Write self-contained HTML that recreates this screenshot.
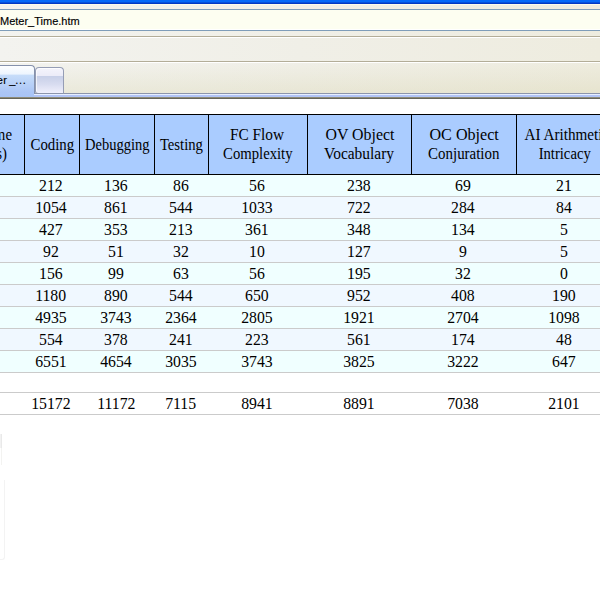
<!DOCTYPE html>
<html><head><meta charset="utf-8">
<style>
html,body{margin:0;padding:0;background:#fff;}
body{width:600px;height:598px;overflow:hidden;position:relative;font-family:"Liberation Serif",serif;}
.abs{position:absolute;}
#chrome{left:0;top:0;width:600px;height:99px;background:linear-gradient(to right,#f3f3ef 0%,#f0efe7 50%,#eeecdf 100%);}
#title{left:0;top:0;width:600px;height:2px;background:#0468f8;}
#title2{left:0;top:2px;width:600px;height:3px;background:linear-gradient(to bottom,#0450dc 0,#0450dc 1px,#0038c4 1px,#0038c4 2px,#fdfbe8 2px);}
#addr{left:-2px;top:9px;width:610px;height:20px;border:1px solid #7f9db9;background:linear-gradient(to bottom,#fdfef1 0,#fdfef1 19px,#fff 19px);}
#tabbg{left:0;top:63px;width:600px;height:30px;background:linear-gradient(to bottom,rgba(200,195,140,0) 0%,rgba(200,195,140,0.2) 100%);}
#addrtxt{left:0px;top:15px;letter-spacing:0;-webkit-text-stroke:0.15px #000;font:11px "Liberation Sans",sans-serif;color:#000;white-space:nowrap;line-height:13px;}
.sepd{left:0;width:600px;height:1px;background:#b3ad98;}
.sepl{left:0;width:600px;height:1px;background:#fff;}
#tab1{left:-20px;top:65px;width:53px;height:28px;border:1px solid #8591ac;border-bottom:none;border-radius:4px 4px 0 0;background:linear-gradient(to bottom,#fdfeff 0%,#eef5fe 28%,#c6dcf9 34%,#a8c3f6 100%);}
.t1{top:74px;-webkit-text-stroke:0.15px #000;font:11px "Liberation Sans",sans-serif;color:#000;white-space:nowrap;line-height:13px;}
#tab1b{left:0;top:93px;width:34px;height:4px;background:linear-gradient(to bottom,#abc5f6,#a8c3f6);}
#tab2{left:35px;top:67px;width:27px;height:25px;border:1px solid #959db5;border-bottom-color:#8c95ac;border-radius:4px 4px 0 3px;box-shadow:inset 1px 1px 0 rgba(255,255,255,0.7);background:linear-gradient(to bottom,#f4f4fc 0%,#ececf8 30%,#c8d0e8 34%,#d8dcf0 65%,#f0f0fc 100%);}
#tabline{left:34px;top:93px;width:566px;height:1px;background:#8c95ac;}
#bluestrip{left:0;top:94px;width:600px;height:3px;background:linear-gradient(to bottom,#e6eeff 0,#e6eeff 1px,#b2c4f6 1px);}
#darkline{left:0;top:97px;width:600px;height:2px;background:linear-gradient(to bottom,#8e8b78 0,#8e8b78 1px,#66655a 1px);}
table{position:absolute;left:-52px;top:114px;width:664px;border-collapse:collapse;table-layout:fixed;font-size:16px;line-height:19px;color:#000;}
th{white-space:nowrap;background:#aaccff;font-weight:normal;border:1px solid #000;height:59px;padding:0;text-align:center;vertical-align:middle;}
td{border-top:1px solid #cbcbcb;border-bottom:1px solid #cbcbcb;height:21px;padding:0;text-align:center;vertical-align:middle;white-space:nowrap;}
tr.a td{background:#f0ffff;}
tr.b td{background:#f0f8ff;}
tr.w td{background:#fff;}
tr.blank td{height:19px;}
.s{display:inline-block;transform-origin:50% 50%;position:relative;}
th.one .s{top:0px;}
th.two .s{top:-1px;}
td .s{top:0px;}
</style></head><body>
<div id="chrome" class="abs"></div>
<div id="title" class="abs"></div><div id="title2" class="abs"></div>
<div id="addr" class="abs"></div>
<div id="addrtxt" class="abs">Meter_Time.htm</div>
<div class="abs sepd" style="top:36px"></div><div class="abs sepl" style="top:37px"></div>
<div class="abs sepd" style="top:61px"></div><div class="abs sepl" style="top:62px"></div>
<div id="tabbg" class="abs"></div>
<div id="bluestrip" class="abs"></div>
<div id="darkline" class="abs"></div>
<div id="tabline" class="abs"></div>
<div id="tab2" class="abs"></div>
<div id="tab1" class="abs"></div>
<div id="tab1b" class="abs"></div>
<div class="abs t1" style="left:-3.2px;letter-spacing:0.3px">er</div><div class="abs t1" style="left:9.2px">_</div><div class="abs t1" style="left:15.3px;letter-spacing:0.7px">...</div>
<table>
<colgroup><col style="width:76px"><col style="width:55px"><col style="width:75px"><col style="width:54px"><col style="width:99px"><col style="width:104px"><col style="width:105px"><col style="width:96px"></colgroup>
<tr><th class="two"><span class="s" style="transform:translateX(-7.10px) scaleX(0.9300)">Total Time</span><br><span class="s" style="transform:translateX(-0.60px) scaleX(0.9300)">(hours)</span></th><th class="one"><span class="s" style="transform:translateX(0.80px) scaleX(0.9263)">Coding</span></th><th class="one"><span class="s" style="transform:translateX(0.70px) scaleX(0.9060)">Debugging</span></th><th class="one"><span class="s" style="transform:translateX(-0.05px) scaleX(0.9172)">Testing</span></th><th class="two"><span class="s" style="transform:translateX(-1.20px) scaleX(0.9573)">FC Flow</span><br><span class="s" style="transform:translateX(0.05px) scaleX(0.9187)">Complexity</span></th><th class="two"><span class="s" style="transform:translateX(0.20px) scaleX(0.9913)">OV Object</span><br><span class="s" style="transform:translateX(-0.25px) scaleX(0.9633)">Vocabulary</span></th><th class="two"><span class="s" style="transform:translateX(-0.30px) scaleX(1.0059)">OC Object</span><br><span class="s" style="transform:translateX(-0.45px) scaleX(0.9329)">Conjuration</span></th><th class="two"><span class="s" style="transform:translateX(2.20px) scaleX(0.9470)">AI Arithmetic</span><br><span class="s" style="transform:translateX(0.25px) scaleX(0.9161)">Intricacy</span></th></tr>
<tr class="a"><td></td><td><span class="s" style="transform:translateX(-1.1px) scaleX(0.985)">212</span></td><td><span class="s" style="transform:translateX(-1.1px) scaleX(0.985)">136</span></td><td><span class="s" style="transform:translateX(-1.1px) scaleX(0.985)">86</span></td><td><span class="s" style="transform:translateX(-1.1px) scaleX(0.985)">56</span></td><td><span class="s" style="transform:translateX(-1.1px) scaleX(0.985)">238</span></td><td><span class="s" style="transform:translateX(-1.1px) scaleX(0.985)">69</span></td><td><span class="s" style="transform:translateX(-1.1px) scaleX(0.985)">21</span></td></tr>
<tr class="b"><td></td><td><span class="s" style="transform:translateX(-1.1px) scaleX(0.985)">1054</span></td><td><span class="s" style="transform:translateX(-1.1px) scaleX(0.985)">861</span></td><td><span class="s" style="transform:translateX(-1.1px) scaleX(0.985)">544</span></td><td><span class="s" style="transform:translateX(-1.1px) scaleX(0.985)">1033</span></td><td><span class="s" style="transform:translateX(-1.1px) scaleX(0.985)">722</span></td><td><span class="s" style="transform:translateX(-1.1px) scaleX(0.985)">284</span></td><td><span class="s" style="transform:translateX(-1.1px) scaleX(0.985)">84</span></td></tr>
<tr class="a"><td></td><td><span class="s" style="transform:translateX(-1.1px) scaleX(0.985)">427</span></td><td><span class="s" style="transform:translateX(-1.1px) scaleX(0.985)">353</span></td><td><span class="s" style="transform:translateX(-1.1px) scaleX(0.985)">213</span></td><td><span class="s" style="transform:translateX(-1.1px) scaleX(0.985)">361</span></td><td><span class="s" style="transform:translateX(-1.1px) scaleX(0.985)">348</span></td><td><span class="s" style="transform:translateX(-1.1px) scaleX(0.985)">134</span></td><td><span class="s" style="transform:translateX(-1.1px) scaleX(0.985)">5</span></td></tr>
<tr class="b"><td></td><td><span class="s" style="transform:translateX(-1.1px) scaleX(0.985)">92</span></td><td><span class="s" style="transform:translateX(-1.1px) scaleX(0.985)">51</span></td><td><span class="s" style="transform:translateX(-1.1px) scaleX(0.985)">32</span></td><td><span class="s" style="transform:translateX(-1.1px) scaleX(0.985)">10</span></td><td><span class="s" style="transform:translateX(-1.1px) scaleX(0.985)">127</span></td><td><span class="s" style="transform:translateX(-1.1px) scaleX(0.985)">9</span></td><td><span class="s" style="transform:translateX(-1.1px) scaleX(0.985)">5</span></td></tr>
<tr class="a"><td></td><td><span class="s" style="transform:translateX(-1.1px) scaleX(0.985)">156</span></td><td><span class="s" style="transform:translateX(-1.1px) scaleX(0.985)">99</span></td><td><span class="s" style="transform:translateX(-1.1px) scaleX(0.985)">63</span></td><td><span class="s" style="transform:translateX(-1.1px) scaleX(0.985)">56</span></td><td><span class="s" style="transform:translateX(-1.1px) scaleX(0.985)">195</span></td><td><span class="s" style="transform:translateX(-1.1px) scaleX(0.985)">32</span></td><td><span class="s" style="transform:translateX(-1.1px) scaleX(0.985)">0</span></td></tr>
<tr class="b"><td></td><td><span class="s" style="transform:translateX(-1.1px) scaleX(0.985)">1180</span></td><td><span class="s" style="transform:translateX(-1.1px) scaleX(0.985)">890</span></td><td><span class="s" style="transform:translateX(-1.1px) scaleX(0.985)">544</span></td><td><span class="s" style="transform:translateX(-1.1px) scaleX(0.985)">650</span></td><td><span class="s" style="transform:translateX(-1.1px) scaleX(0.985)">952</span></td><td><span class="s" style="transform:translateX(-1.1px) scaleX(0.985)">408</span></td><td><span class="s" style="transform:translateX(-1.1px) scaleX(0.985)">190</span></td></tr>
<tr class="a"><td></td><td><span class="s" style="transform:translateX(-1.1px) scaleX(0.985)">4935</span></td><td><span class="s" style="transform:translateX(-1.1px) scaleX(0.985)">3743</span></td><td><span class="s" style="transform:translateX(-1.1px) scaleX(0.985)">2364</span></td><td><span class="s" style="transform:translateX(-1.1px) scaleX(0.985)">2805</span></td><td><span class="s" style="transform:translateX(-1.1px) scaleX(0.985)">1921</span></td><td><span class="s" style="transform:translateX(-1.1px) scaleX(0.985)">2704</span></td><td><span class="s" style="transform:translateX(-1.1px) scaleX(0.985)">1098</span></td></tr>
<tr class="b"><td></td><td><span class="s" style="transform:translateX(-1.1px) scaleX(0.985)">554</span></td><td><span class="s" style="transform:translateX(-1.1px) scaleX(0.985)">378</span></td><td><span class="s" style="transform:translateX(-1.1px) scaleX(0.985)">241</span></td><td><span class="s" style="transform:translateX(-1.1px) scaleX(0.985)">223</span></td><td><span class="s" style="transform:translateX(-1.1px) scaleX(0.985)">561</span></td><td><span class="s" style="transform:translateX(-1.1px) scaleX(0.985)">174</span></td><td><span class="s" style="transform:translateX(-1.1px) scaleX(0.985)">48</span></td></tr>
<tr class="a"><td></td><td><span class="s" style="transform:translateX(-1.1px) scaleX(0.985)">6551</span></td><td><span class="s" style="transform:translateX(-1.1px) scaleX(0.985)">4654</span></td><td><span class="s" style="transform:translateX(-1.1px) scaleX(0.985)">3035</span></td><td><span class="s" style="transform:translateX(-1.1px) scaleX(0.985)">3743</span></td><td><span class="s" style="transform:translateX(-1.1px) scaleX(0.985)">3825</span></td><td><span class="s" style="transform:translateX(-1.1px) scaleX(0.985)">3222</span></td><td><span class="s" style="transform:translateX(-1.1px) scaleX(0.985)">647</span></td></tr>
<tr class="w blank"><td></td><td></td><td></td><td></td><td></td><td></td><td></td><td></td></tr>
<tr class="w"><td></td><td><span class="s" style="transform:translateX(-1.1px) scaleX(0.985)">15172</span></td><td><span class="s" style="transform:translateX(-1.1px) scaleX(0.985)">11172</span></td><td><span class="s" style="transform:translateX(-1.1px) scaleX(0.985)">7115</span></td><td><span class="s" style="transform:translateX(-1.1px) scaleX(0.985)">8941</span></td><td><span class="s" style="transform:translateX(-1.1px) scaleX(0.985)">8891</span></td><td><span class="s" style="transform:translateX(-1.1px) scaleX(0.985)">7038</span></td><td><span class="s" style="transform:translateX(-1.1px) scaleX(0.985)">2101</span></td></tr>
</table>
<div class="abs" style="left:0;top:434px;width:1px;height:14px;background:#f2f2f2;"></div>
<div class="abs" style="left:1px;top:434px;width:1px;height:14px;background:#e9e9e9;"></div>
<div class="abs" style="left:1px;top:448px;width:1px;height:17px;background:#f3f3f1;"></div>
<div class="abs" style="left:-20px;top:480px;width:23px;height:79px;border:1px solid #f3f3f3;border-top:none;border-radius:0 0 3px 3px;"></div>
</body></html>
